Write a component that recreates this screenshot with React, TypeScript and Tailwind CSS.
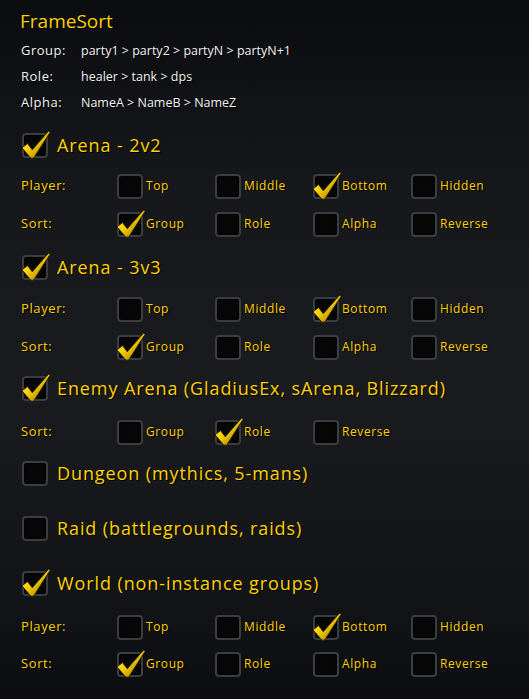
import React from "react";

const FONT = { fontFamily: '"Open Sans", "DejaVu Sans", sans-serif' };

function Check({ checked }: { checked: boolean }) {
  return (
    <span className="relative inline-block h-[25px] w-[26px] shrink-0">
      <span className="absolute inset-0 rounded-[4px] border-2 border-[#3c3d40] bg-[#070708] shadow-[inset_0_0_3px_rgba(0,0,0,0.9)]" />
      {checked && (
        <svg
          viewBox="0 0 32 32"
          className="absolute left-[-1px] top-[-3px] h-[30px] w-[30px]"
        >
          <defs>
            <linearGradient id="gold" x1="0" y1="0" x2="1" y2="1">
              <stop offset="0" stopColor="#fff27a" />
              <stop offset="0.45" stopColor="#f5d000" />
              <stop offset="1" stopColor="#8a6200" />
            </linearGradient>
          </defs>
          <polygon
            points="1,19 7,14.5 12,21 29.5,1 31,2.5 13.5,30 10.5,30"
            fill="url(#gold)"
            stroke="#2a1c00"
            strokeWidth="1"
            strokeLinejoin="round"
          />
        </svg>
      )}
    </span>
  );
}

function Header({ label, checked, className = "" }: { label: string; checked: boolean; className?: string }) {
  return (
    <div className={`flex h-[26px] items-center pl-[22px] ${className}`}>
      <Check checked={checked} />
      <span className="ml-[9px] text-[18px] tracking-[0.9px] text-[#ffd100] [text-shadow:1px_1px_0_#000]">{label}</span>
    </div>
  );
}

function OptionRow({
  label,
  options,
  className = "",
}: {
  label: string;
  options: [string, boolean][];
  className?: string;
}) {
  return (
    <div className={`flex h-[26px] items-center pl-[21px] ${className}`}>
      <span className="w-[96px] text-[13px] tracking-[0.6px] text-[#ffd100] [text-shadow:1px_1px_0_#000]">{label}</span>
      {options.map(([name, on]) => (
        <div key={name} className="flex w-[98px] items-center">
          <Check checked={on} />
          <span className="ml-[3px] text-[12px] tracking-[0.6px] text-[#ffd100] [text-shadow:1px_1px_0_#000]">{name}</span>
        </div>
      ))}
    </div>
  );
}

function Info({ label, value, className = "" }: { label: string; value: string; className?: string }) {
  return (
    <div className={`flex h-[26px] items-center pl-[21px] text-[12.5px] text-[#f2f2f2] [text-shadow:1px_1px_0_#000] ${className}`}>
      <span className="w-[60px] text-[13px] tracking-[0.5px]">{label}</span>
      <span>{value}</span>
    </div>
  );
}

const player = (bottom: boolean): [string, boolean][] => [
  ["Top", false],
  ["Middle", false],
  ["Bottom", bottom],
  ["Hidden", false],
];

const sort: [string, boolean][] = [
  ["Group", true],
  ["Role", false],
  ["Alpha", false],
  ["Reverse", false],
];

export default function App() {
  return (
    <div
      style={FONT}
      className="h-[699px] w-[529px] overflow-hidden bg-[linear-gradient(180deg,#0a0c0f_0%,#16171a_25%,#1a1b1e_55%,#121418_85%,#0b0d11_100%)] pt-[8px]"
    >
      <div className="flex h-[26px] items-center pl-[20px] text-[19px] text-[#ffd100] [text-shadow:1px_1px_0_#000]">
        FrameSort
      </div>
      <Info label="Group:" value="party1 > party2 > partyN > partyN+1" className="mt-[4px]" />
      <Info label="Role:" value="healer > tank > dps" />
      <Info label="Alpha:" value="NameA > NameB > NameZ" />

      <Header label="Arena - 2v2" checked className="mt-[16px]" />
      <OptionRow label="Player:" options={player(true)} className="mt-[15px]" />
      <OptionRow label="Sort:" options={sort} className="mt-[12px]" />

      <Header label="Arena - 3v3" checked className="mt-[17px]" />
      <OptionRow label="Player:" options={player(true)} className="mt-[16px]" />
      <OptionRow label="Sort:" options={sort} className="mt-[12px]" />

      <Header label="Enemy Arena (GladiusEx, sArena, Blizzard)" checked className="mt-[15px]" />
      <OptionRow
        label="Sort:"
        options={[
          ["Group", false],
          ["Role", true],
          ["Reverse", false],
        ]}
        className="mt-[18px]"
      />

      <Header label="Dungeon (mythics, 5-mans)" checked={false} className="mt-[15px]" />
      <Header label="Raid (battlegrounds, raids)" checked={false} className="mt-[29px]" />

      <Header label="World (non-instance groups)" checked className="mt-[29px]" />
      <OptionRow label="Player:" options={player(true)} className="mt-[18px]" />
      <OptionRow label="Sort:" options={sort} className="mt-[11px]" />
    </div>
  );
}
